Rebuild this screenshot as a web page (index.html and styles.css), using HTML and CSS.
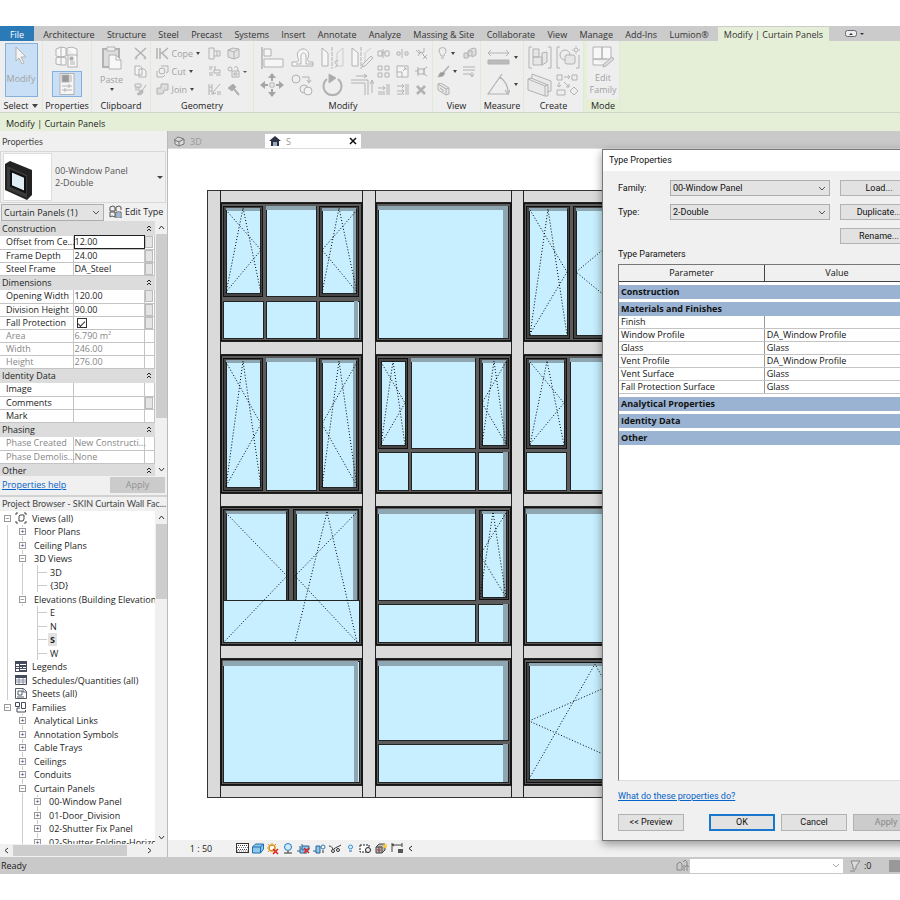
FILE: index.html
```html
<!DOCTYPE html>
<html lang="en">
<head>
  <meta charset="UTF-8">
  <title>Curtain Panels</title>
  <link rel="stylesheet" href="styles.css">
</head>
<body>
<div class="app">

  <nav class="tabs">
    <div class="tab-set">
      <button class="tab file">File</button>
      <button class="tab">Architecture</button>
      <button class="tab">Structure</button>
      <button class="tab">Steel</button>
      <button class="tab">Precast</button>
      <button class="tab">Systems</button>
      <button class="tab">Insert</button>
      <button class="tab">Annotate</button>
      <button class="tab">Analyze</button>
      <button class="tab">Massing &amp; Site</button>
      <button class="tab">Collaborate</button>
      <button class="tab">View</button>
      <button class="tab">Manage</button>
      <button class="tab">Add-Ins</button>
      <button class="tab">Lumion®</button>
      <button class="tab active">Modify | Curtain Panels</button>
    </div>
    <button class="toggle" aria-label="Minimize ribbon">
      <svg width="20" height="8" viewBox="0 0 20 8"><rect x="0.5" y="0.5" width="11" height="6" rx="2" fill="#eee" stroke="#667"/><path d="M4 5l2-2 2 2z" fill="#333"/><path d="M15 3h4l-2 2z" fill="#333"/></svg>
    </button>
  </nav>

  <div class="ribbon">
    <section class="panel p-select">
      <div class="tools">
        <button class="big on">
          <svg class="ico" width="14" height="20" viewBox="0 0 14 20"><path d="M2 1v14l3-3 3 6 2-1-3-6h5z" fill="#f4f4f4"/></svg>
          <span>Modify</span>
        </button>
      </div>
      <h2>Select <i class="caret"></i></h2>
    </section>

    <section class="panel p-props">
      <div class="tools stack">
        <button class="mid" aria-label="Type properties">
          <svg class="ico" width="24" height="22" viewBox="0 0 24 22"><path d="M1 3l5-2 5 1v8l-5 1-5-1zM6 1v10M12 2l5-1 5 2v7M12 2v8M1 12l5-1 5 1v7H6l-5-1zM6 11v8" fill="#f8f8f8"/><rect x="13" y="9" width="9" height="12" fill="#f8f8f8"/><path d="M15 11h3v3h-3z" fill="#aaa"/><path d="M15 16h5M15 18h5"/></svg>
        </button>
        <button class="mid on" aria-label="Properties">
          <svg class="ico" width="16" height="22" viewBox="0 0 16 22"><rect x="1" y="0.5" width="14" height="21" fill="#f6f6f6"/><rect x="3" y="2" width="7" height="7" fill="#999"/><path d="M12 2v7M3 13h10M3 17h10M10 11v4M6 15v4"/></svg>
        </button>
      </div>
      <h2>Properties</h2>
    </section>

    <section class="panel p-clip">
      <div class="tools">
        <button class="big">
          <svg class="ico" width="20" height="24" viewBox="0 0 20 24"><path d="M1 3h16v18H1z" fill="#ddd" stroke-width="2"/><path d="M5 1h8v4H5z" fill="#eee"/><path d="M7 9h7l5 5v9H7z" fill="#f8f8f8"/><path d="M14 9v5h5"/></svg>
          <span>Paste</span>
          <i class="caret"></i>
        </button>
        <div class="small one">
          <button aria-label="Cut to clipboard"><svg class="ico" width="13" height="13" viewBox="0 0 13 13"><path d="M1 1l10 9M12 1L2 10" stroke-width="1.5"/><circle cx="2" cy="11" r="1"/><circle cx="11" cy="11" r="1"/></svg></button>
          <button aria-label="Copy to clipboard"><svg class="ico" width="13" height="13" viewBox="0 0 13 13"><path d="M1 1h5l2 2v7H1zM5 4h5l2 2v6H5z" fill="#f4f4f4"/></svg></button>
          <button aria-label="Match type"><svg class="ico" width="13" height="13" viewBox="0 0 13 13"><path d="M1 1h6v3H1zM1 5h5M1 7h5"/><path d="M12 2L8 8M8 7c-3 0-2 3-5 4 3 2 6 0 6-3z" fill="#bbb"/></svg></button>
        </div>
      </div>
      <h2>Clipboard</h2>
    </section>

    <section class="panel p-geo">
      <div class="tools">
        <div class="small geo">
          <button><svg class="ico" width="13" height="13" viewBox="0 0 13 13"><path d="M1 1v11M4 1v11M12 1L6 6l6 6M4 6h3" stroke-width="1.5"/></svg><span>Cope</span><i class="caret"></i></button>
          <button aria-label="Wall joins"><svg class="ico" width="13" height="13" viewBox="0 0 13 13"><path d="M1 1h5v3h6v5H6v3H1zM6 4v5M9 4v5"/></svg></button>
          <button aria-label="Split face"><svg class="ico" width="13" height="13" viewBox="0 0 13 13"><path d="M1 3l5-2 6 1v8l-5 2-6-2zM1 3l6 2v7M7 5l5-3" fill="#e2e2e2"/></svg></button>
          <button><svg class="ico" width="13" height="13" viewBox="0 0 13 13"><path d="M5 1h7v6l-2 1"/><circle cx="6" cy="6" r="3"/><path d="M1 6v6h6l2-2" /></svg><span>Cut</span><i class="caret"></i></button>
          <button aria-label="Beam joins"><svg class="ico" width="13" height="13" viewBox="0 0 13 13"><path d="M1 2h4M1 4h3M1 8h4M1 10h4M7 1v4M6 5h6v3H6zM8 10h5"/></svg></button>
          <button aria-label="Paint"><svg class="ico" width="20" height="13" viewBox="0 0 20 13"><circle cx="3" cy="4" r="2"/><path d="M5 6h7v6H5zM7 3c2-3 4-1 4 3M7 8h3v2H7z"/><path d="M16 6h4l-2 2z" fill="#555" stroke="none"/></svg></button>
          <button><svg class="ico" width="13" height="13" viewBox="0 0 13 13"><path d="M5 1h7v6H8v1a3 3 0 0 1-3 3H1V5h4z" fill="#ddd"/></svg><span>Join</span><i class="caret"></i></button>
          <button aria-label="Edit joins"><svg class="ico" width="13" height="13" viewBox="0 0 13 13"><path d="M1 1v11M4 1v11M12 1L6 8l-1 3 3-1M9 9h4M9 11h4M1 4h3M1 8h3"/></svg></button>
          <button aria-label="Demolish"><svg class="ico" width="13" height="13" viewBox="0 0 13 13"><path d="M1 5l5-4 3 3-4 4z" fill="#aaa"/><path d="M7 6l5 6" stroke-width="2"/></svg></button>
        </div>
      </div>
      <h2>Geometry</h2>
    </section>

    <section class="panel p-modify">
      <div class="tools">
        <div class="large four">
          <button aria-label="Align"><svg class="ico" width="23" height="22" viewBox="0 0 23 22"><path d="M1 0v22" stroke-width="1.5"/><path d="M3 2h7v7H3zM3 12h19v8H3z" fill="#f6f6f6"/></svg></button>
          <button aria-label="Offset"><svg class="ico" width="23" height="22" viewBox="0 0 23 22"><path d="M1 19v-4h4c3 0 3-2 2-4-2-5 1-9 5-9s7 4 5 9c-1 2 0 4 2 4h3v4z" fill="#f6f6f6"/><path d="M5 17h5V9c0-4 5-4 5 0v8h7"/></svg></button>
          <button aria-label="Mirror by axis"><svg class="ico" width="23" height="22" viewBox="0 0 23 22"><path d="M1 1l6 5v13H1z" fill="#f6f6f6"/><path d="M22 1l-6 5v13h6z" stroke="#ccc"/><path d="M11 0v22" stroke-dasharray="4 1"/><path d="M17 14c-3-1-4 1-2 3s1 2-1 3" /></svg></button>
          <button aria-label="Mirror by line"><svg class="ico" width="23" height="22" viewBox="0 0 23 22"><path d="M1 1l6 5v13H1z" fill="#f6f6f6"/><path d="M20 1l-6 5v9" stroke="#ccc"/><path d="M10 0v22" stroke-dasharray="4 1"/><path d="M12 17l8-8 2 2-8 8-3 1z" fill="#eee"/></svg></button>
          <button aria-label="Move"><svg class="ico" width="24" height="24" viewBox="0 0 24 24"><path d="M12 0l4 5h-3v3h-2V5H8zM12 24l-4-5h3v-3h2v3h3zM0 12l5-4v3h3v2H5v3zM24 12l-5 4v-3h-3v-2h3V8z" fill="#a4a4a4" stroke="none"/><path d="M10 10h4v4h-4z"/></svg></button>
          <button aria-label="Copy"><svg class="ico" width="23" height="24" viewBox="0 0 23 24"><circle cx="5" cy="6" r="4"/><circle cx="13" cy="16" r="4"/><circle cx="17" cy="18" r="4" fill="#f2f2f2"/><path d="M11 4h7v5M16 7l2 3 2-3"/></svg></button>
          <button aria-label="Rotate"><svg class="ico" width="23" height="24" viewBox="0 0 23 24"><path d="M6 6a9 9 0 1 0 11 0" stroke-width="2"/><path d="M8 1l7 4-7 5z" fill="#aaa"/></svg></button>
          <button aria-label="Trim to corner"><svg class="ico" width="23" height="24" viewBox="0 0 23 24"><path d="M0 7h17v15M0 10h14v12"/><path d="M5 3h10M13 1l3 2-3 2M21 20V8M19 11l2-4 2 4"/></svg></button>
        </div>
        <div class="small three">
          <button aria-label="Split element"><svg class="ico" width="13" height="13" viewBox="0 0 13 13"><path d="M1 4h4v5H1zM8 4h4v5H8zM6 2v9M5 6h3"/></svg></button>
          <button aria-label="Split with gap"><svg class="ico" width="13" height="13" viewBox="0 0 13 13"><path d="M1 5h3v3H1zM9 5h3v3H9zM6 2v9"/></svg></button>
          <button aria-label="Unpin"><svg class="ico" width="13" height="13" viewBox="0 0 13 13"><path d="M3 3l6 5M9 1v4l-6 1M1 3l4 4M8 8l4 4M12 8l-4 4M3 9l2-3"/></svg></button>
          <button aria-label="Array"><svg class="ico" width="13" height="13" viewBox="0 0 13 13"><path d="M1 1h4v4H1zM8 1h4v4H8zM1 8h4v4H1zM8 8h4v4H8z"/></svg></button>
          <button aria-label="Scale"><svg class="ico" width="13" height="13" viewBox="0 0 13 13"><path d="M1 1h11v11H1zM1 7h5v5M7 6l3-3M8 3h2v2" fill="#f4f4f4"/></svg></button>
          <button aria-label="Pin"><svg class="ico" width="13" height="13" viewBox="0 0 13 13"><path d="M3 4h6v5H3zM3 2v9M9 3v7M0 6h3M9 4l3-2M9 9l3 2"/></svg></button>
          <button aria-label="Trim single"><svg class="ico" width="13" height="13" viewBox="0 0 13 13"><path d="M12 1v11M10 1v11M1 5h7M6 3l2 2-2 2M1 9h7M1 11h7"/></svg></button>
          <button aria-label="Trim multiple"><svg class="ico" width="13" height="13" viewBox="0 0 13 13"><path d="M12 1v11M10 1v11M1 3h7M6 1l2 2-2 2M1 8h7M6 6l2 2-2 2M1 11h7"/></svg></button>
          <button aria-label="Delete"><svg class="ico" width="13" height="13" viewBox="0 0 13 13"><path d="M2 3l8 8M10 3l-8 8" stroke-width="2.5"/></svg></button>
        </div>
      </div>
      <h2>Modify</h2>
    </section>

    <section class="panel p-view">
      <div class="tools">
        <div class="small two">
          <button aria-label="Hide in view"><svg class="ico" width="11" height="13" viewBox="0 0 11 13"><path d="M4 9c0-2-2-3-2-5a3 3 0 0 1 7 0c0 2-2 3-2 5zM4 11h3"/></svg><i class="caret"></i></button>
          <button aria-label="Displace elements"><svg class="ico" width="14" height="13" viewBox="0 0 14 13"><path d="M1 6h4v5H1zM5 4h4v5H5zM8 2l3-1 2 1v6l-4 2M5 4l3-2" fill="#ddd"/></svg></button>
          <button aria-label="Override graphics"><svg class="ico" width="13" height="13" viewBox="0 0 13 13"><path d="M12 1L6 8" stroke-width="1.5"/><path d="M6 7l-3 1-2 4 5-1 2-3z" fill="#999"/></svg><i class="caret"></i></button>
          <button aria-label="Linework"><svg class="ico" width="13" height="13" viewBox="0 0 13 13"><path d="M0 2h12M0 5h12M0 9h8M9 7v5M7 9l2 3 2-3"/></svg></button>
          <button aria-label="Selection box"><svg class="ico" width="13" height="13" viewBox="0 0 13 13"><path d="M1 1l3-1 8 5v6l-3 1-8-5zM1 1l8 5v6M9 6l3-1M3 5l3 2v2" fill="#e6e6e6"/></svg></button>
        </div>
      </div>
      <h2>View</h2>
    </section>

    <section class="panel p-measure">
      <div class="tools">
        <div class="large">
          <button aria-label="Measure"><svg class="ico" width="23" height="22" viewBox="0 0 23 22"><path d="M1 6h21M4 3L1 6l3 3M19 3l3 3-3 3" /><path d="M1 13h21v4H1z" fill="#bbb"/></svg><i class="caret"></i></button>
          <button aria-label="Dimension"><svg class="ico" width="23" height="24" viewBox="0 0 23 24"><path d="M15 1L1 21h21M13 4c5 4 8 9 8 15M12 5l4 1M18 17l3 4 2-4" stroke-width="1.2"/></svg><i class="caret"></i></button>
        </div>
      </div>
      <h2>Measure</h2>
    </section>

    <section class="panel p-create">
      <div class="tools">
        <div class="large two">
          <button aria-label="Create assembly"><svg class="ico" width="24" height="23" viewBox="0 0 24 23"><path d="M4 1H1v21h3M20 1h3v21h-3"/><path d="M5 3h6v8H5zM5 11h9v8H5zM14 11V7l5-1v10l-5 3z" fill="#e6e6e6"/></svg></button>
          <button aria-label="Create group"><svg class="ico" width="24" height="23" viewBox="0 0 24 23"><path d="M4 1H1v21h3M20 22h3V9"/><circle cx="9" cy="9" r="5"/><rect x="9" y="9" width="10" height="9" rx="2" fill="#e6e6e6"/><circle cx="20" cy="4" r="2"/><path d="M20 0v1M20 7v1M16 4h1M23 4h1"/></svg></button>
          <button aria-label="Create parts"><svg class="ico" width="25" height="24" viewBox="0 0 25 24"><path d="M5 1l19 7v10l-4 1M5 1v5M1 6l3-1 17 7v11l-3 0L1 17zM1 6l17 7v10M18 13l3-1" fill="#e9e9e9"/></svg></button>
          <button aria-label="Create similar"><svg class="ico" width="24" height="24" viewBox="0 0 24 24"><path d="M1 2h5v5H1zM16 2h5v5h-5zM8 4h6M12 2l2 2-2 2M3 9v5M1 12l2 2 2-2M8 9l5 5M13 11v3h-3M1 17h8v5H1zM18 14l4 4-4 4-4-4z"/></svg></button>
        </div>
      </div>
      <h2>Create</h2>
    </section>

    <section class="panel p-mode">
      <div class="tools">
        <button class="big">
          <svg class="ico" width="23" height="22" viewBox="0 0 23 22"><path d="M1 1h9v12H1zM10 1h9v12h-9zM1 13h14M1 13v6h12" fill="#f8f8f8"/><path d="M12 18l8-7 2 2-8 7-3 1z" fill="#ddd"/></svg>
          <span>Edit<br>Family</span>
        </button>
      </div>
      <h2>Mode</h2>
    </section>
  </div>

  <div class="options">Modify | Curtain Panels</div>

  <div class="workspace">
    <aside class="side">
      <section class="props">
        <h3>Properties</h3>
        <button class="type">
          <span class="thumb"><svg width="30" height="40" viewBox="0 0 30 40"><path d="M0 3l5-3 22 9v25l-5 5-22-10z" fill="#222"/><path d="M2 5l20 9v23L2 28z" fill="#3a3a3a"/><path d="M6 10l14 6v15L6 25z" fill="#dfeef5" stroke="#111" stroke-width="2"/></svg></span>
          <span class="type-name">00-Window Panel<br>2-Double</span>
          <i class="caret"></i>
        </button>
        <div class="filter">
          <div class="pick">
            <select aria-label="Selection filter"><option>Curtain Panels (1)</option></select>
            <svg class="chev" width="8" height="5" viewBox="0 0 8 5"><path d="M1 1l3 3 3-3"/></svg>
          </div>
          <button class="edit-type"><svg width="13" height="13" viewBox="0 0 13 13" fill="none" stroke="#555"><path d="M1 2l3-1 2 1v4H1zM7 2l3-1 2 1v3M7 2v4M1 7h5v5l-3-1-2 1z"/><path d="M7 7h5v6H7z" fill="#fff"/><path d="M8 9h3M8 11h3" stroke="#27c"/></svg>Edit Type</button>
        </div>
        <div class="scroller">
          <div class="clip">
            <table class="grid">
              <colgroup><col class="c1"><col class="c2"><col class="c3"></colgroup>
              <tr class="head"><th colspan="2">Construction</th><td><svg class="fold" width="5" height="7" viewBox="0 0 5 7"><path d="M0 3l2-2 2 2M0 6l2-2 2 2"/></svg></td></tr>
              <tr><th>Offset from Ce...</th><td><input class="focus" aria-label="Offset" value="12.00"></td><td><button aria-label="Associate offset"></button></td></tr>
              <tr><th>Frame Depth</th><td><input aria-label="Frame Depth" value="24.00"></td><td><button aria-label="Associate depth"></button></td></tr>
              <tr><th>Steel Frame</th><td><input aria-label="Steel Frame" value="DA_Steel"></td><td><button aria-label="Associate frame"></button></td></tr>
              <tr class="head"><th colspan="2">Dimensions</th><td><svg class="fold" width="5" height="7" viewBox="0 0 5 7"><path d="M0 3l2-2 2 2M0 6l2-2 2 2"/></svg></td></tr>
              <tr><th>Opening Width</th><td><input aria-label="Opening Width" value="120.00"></td><td><button aria-label="Associate width"></button></td></tr>
              <tr><th>Division Height</th><td><input aria-label="Division Height" value="90.00"></td><td><button aria-label="Associate height"></button></td></tr>
              <tr><th>Fall Protection</th><td><input type="checkbox" aria-label="Fall Protection" checked></td><td><button aria-label="Associate protection"></button></td></tr>
              <tr class="ro"><th>Area</th><td>6.790 m²</td><td></td></tr>
              <tr class="ro"><th>Width</th><td>246.00</td><td></td></tr>
              <tr class="ro"><th>Height</th><td>276.00</td><td></td></tr>
              <tr class="head"><th colspan="2">Identity Data</th><td><svg class="fold" width="5" height="7" viewBox="0 0 5 7"><path d="M0 3l2-2 2 2M0 6l2-2 2 2"/></svg></td></tr>
              <tr><th>Image</th><td></td><td></td></tr>
              <tr><th>Comments</th><td><input aria-label="Comments"></td><td><button aria-label="Associate comments"></button></td></tr>
              <tr><th>Mark</th><td><input aria-label="Mark"></td><td></td></tr>
              <tr class="head"><th colspan="2">Phasing</th><td><svg class="fold" width="5" height="7" viewBox="0 0 5 7"><path d="M0 3l2-2 2 2M0 6l2-2 2 2"/></svg></td></tr>
              <tr class="ro"><th>Phase Created</th><td>New Constructi...</td><td></td></tr>
              <tr class="ro"><th>Phase Demolis...</th><td>None</td><td></td></tr>
              <tr class="head"><th colspan="2">Other</th><td><svg class="fold" width="5" height="7" viewBox="0 0 5 7"><path d="M0 3l2-2 2 2M0 6l2-2 2 2"/></svg></td></tr>
            </table>
          </div>
          <div class="vbar">
            <svg class="arrow" width="7" height="5" viewBox="0 0 7 5"><path d="M1 4l2.500-3L6 4"/></svg>
            <span class="thumb-props"></span>
            <svg class="arrow" width="7" height="5" viewBox="0 0 7 5"><path d="M1 1l2.500 3L6 1"/></svg>
          </div>
        </div>
        <div class="apply-row"><a href="#">Properties help</a><button disabled>Apply</button></div>
      </section>

      <section class="browser">
        <h3>Project Browser - SKIN Curtain Wall Fac...</h3>
        <div class="scroller">
          <ul class="tree">
            <li class="l0 first"><button class="ex" aria-label="Collapse">−</button><svg width="12" height="12" viewBox="0 0 12 12" fill="none" stroke="#444"><path d="M1 3V1h2M9 1h2v2M11 9v2H9M3 11H1V9M4 4l1-1h4v4L8 9H4z"/></svg>Views (all)</li>
            <li class="l1 run"><button class="ex" aria-label="Expand">+</button>Floor Plans</li>
            <li class="l1 run"><button class="ex" aria-label="Expand">+</button>Ceiling Plans</li>
            <li class="l1 run"><button class="ex" aria-label="Collapse">−</button>3D Views</li>
            <li class="l2 leaf run mid-run">3D</li>
            <li class="l2 leaf run mid-run">{3D}</li>
            <li class="l1 run"><button class="ex" aria-label="Collapse">−</button>Elevations (Building Elevation</li>
            <li class="l2 leaf run">E</li>
            <li class="l2 leaf run">N</li>
            <li class="l2 leaf run"><b>S</b></li>
            <li class="l2 leaf run">W</li>
            <li class="l0 leaf run"><svg width="12" height="11" viewBox="0 0 12 11"><path d="M0 0h12v11H0z" fill="#454b5a"/><path d="M1 3h3v2H1zM5 3h6v1H5zM1 6h3v1H1zM5 6h2v1H5zM8 6h3v1H8zM1 8h3v2H1zM5 8h6v1H5z" fill="#fff"/></svg>Legends</li>
            <li class="l0 leaf run"><svg width="12" height="10" viewBox="0 0 12 10"><path d="M0.500 0.500h11v9h-11z" fill="#fff" stroke="#454b5a"/><path d="M1 5h10M1 7h10M4 2v7M8 2v7" stroke="#8a90a0"/><path d="M0 0h12v3H0z" fill="#454b5a"/></svg>Schedules/Quantities (all)</li>
            <li class="l0 leaf run"><svg width="12" height="11" viewBox="0 0 12 11"><path d="M0.500 0.500h8l3 3v7h-11zM8 1v3h3M3 3h4v4H3zM2 9h7" fill="#fff" stroke="#555c6a"/></svg>Sheets (all)</li>
            <li class="l0 last"><button class="ex" aria-label="Collapse">−</button><svg width="12" height="11" viewBox="0 0 12 11"><path d="M0.500 0.500h4v4h-4zM6.500 0.500h4v6h-4zM2 6v4h8.500V8M2 6h3" fill="#fff" stroke="#454b5a"/></svg>Families</li>
            <li class="l1"><button class="ex" aria-label="Expand">+</button>Analytical Links</li>
            <li class="l1"><button class="ex" aria-label="Expand">+</button>Annotation Symbols</li>
            <li class="l1"><button class="ex" aria-label="Expand">+</button>Cable Trays</li>
            <li class="l1"><button class="ex" aria-label="Expand">+</button>Ceilings</li>
            <li class="l1"><button class="ex" aria-label="Expand">+</button>Conduits</li>
            <li class="l1"><button class="ex" aria-label="Collapse">−</button>Curtain Panels</li>
            <li class="l2 mid-run"><button class="ex" aria-label="Expand">+</button>00-Window Panel</li>
            <li class="l2 mid-run"><button class="ex" aria-label="Expand">+</button>01-Door_Division</li>
            <li class="l2 mid-run"><button class="ex" aria-label="Expand">+</button>02-Shutter Fix Panel</li>
            <li class="l2 mid-run"><button class="ex" aria-label="Expand">+</button>02-Shutter Folding-Horizo</li>
          </ul>
          <div class="vbar">
            <svg class="arrow" width="7" height="5" viewBox="0 0 7 5"><path d="M1 4l2.500-3L6 4"/></svg>
            <span class="thumb-tree"></span>
            <svg class="arrow" width="7" height="5" viewBox="0 0 7 5"><path d="M1 1l2.500 3L6 1"/></svg>
          </div>
        </div>
        <div class="hbar">
          <svg class="arrow" width="5" height="7" viewBox="0 0 5 7"><path d="M4 1L1 3.500 4 6"/></svg>
          <span></span>
          <svg class="arrow" width="5" height="7" viewBox="0 0 5 7"><path d="M1 1l3 2.500L1 6"/></svg>
        </div>
      </section>
    </aside>

    <main class="view">
      <div class="view-tabs">
        <button class="vtab"><svg width="12" height="11" viewBox="0 0 12 11" fill="#ddd" stroke="#777"><path d="M1 4l4-3 6 2v5l-5 2-4-2V4M1 4l5 2 5-3M6 6v4"/></svg><span>3D</span></button>
        <button class="vtab current"><svg width="12" height="10" viewBox="0 0 12 10"><path d="M6 0l6 5h-2v5H2V5H0z" fill="#2b3142"/><path d="M4 6h4v4H4z" fill="#9ab"/></svg><span>S</span><svg class="close" width="8" height="8" viewBox="0 0 8 8"><path d="M1 1l6 6M7 1L1 7" stroke="#111" stroke-width="1.500"/></svg></button>
      </div>

      <div class="canvas">
        <svg class="facade" width="732" height="690" viewBox="168 149 732 690">
          <!-- steel grid -->
          <rect class="wall" x="207.500" y="190.500" width="480" height="607"/>
          <path class="edge" d="M220.500 190v607M362.500 190v607M375.500 190v607M511.500 190v607M523.500 190v607"/>

          <!-- row 1 -->
          <rect class="frame" x="221" y="203" width="141" height="138"/>
          <rect class="sash" x="223" y="206" width="39" height="90"/>
          <rect class="glass" x="226" y="209" width="34" height="84"/>
          <rect class="shade" x="226" y="208" width="34" height="3"/>
          <rect class="glass" x="266" y="206" width="50" height="90"/>
          <rect class="shade" x="266" y="206" width="50" height="4"/>
          <rect class="sash" x="319" y="206" width="39" height="90"/>
          <rect class="glass" x="322" y="209" width="34" height="84"/>
          <path class="shade" d="M322 208h34v85h-3v-82h-31z"/>
          <rect class="glass" x="223" y="301" width="40" height="37"/>
          <rect class="glass" x="266" y="301" width="50" height="37"/>
          <rect class="glass" x="319" y="301" width="40" height="37"/>
          <rect class="shade" x="354" y="301" width="4" height="37"/>
          <path class="swing" d="M226 293l17-85 18 85M226 210l35 40-35 42M322 293l17-85 18 85M357 210l-35 40 35 42"/>

          <rect class="frame" x="376" y="203" width="135" height="138"/>
          <rect class="glass" x="378" y="206" width="130" height="132"/>
          <path class="shade" d="M378 206h130v132h-5V210H378z"/>

          <rect class="frame" x="524" y="203" width="141" height="138"/>
          <rect class="sash" x="526" y="206" width="43" height="132"/>
          <rect class="glass" x="529" y="209" width="38" height="126"/>
          <rect class="shade" x="529" y="208" width="38" height="3"/>
          <rect class="sash" x="573" y="206" width="80" height="132"/>
          <rect class="glass" x="576" y="209" width="75" height="126"/>
          <rect class="shade" x="576" y="208" width="75" height="3"/>
          <path class="swing" d="M530 335l18-126 19 126M530 210l37 62-37 62M651 210l-75 62 75 62"/>

          <!-- row 2 -->
          <rect class="frame" x="221" y="355" width="141" height="138"/>
          <rect class="sash" x="223" y="358" width="39" height="132"/>
          <rect class="glass" x="226" y="361" width="34" height="126"/>
          <rect class="shade" x="226" y="360" width="34" height="3"/>
          <rect class="glass" x="266" y="358" width="50" height="132"/>
          <rect class="shade" x="266" y="358" width="50" height="4"/>
          <rect class="sash" x="319" y="358" width="39" height="132"/>
          <rect class="glass" x="322" y="361" width="34" height="126"/>
          <path class="shade" d="M322 360h34v127h-3V363h-31z"/>
          <path class="swing" d="M226 487l17-126 18 126M226 362l35 62-35 62M322 487l17-126 18 126M357 362l-35 62 35 62"/>

          <rect class="frame" x="376" y="355" width="135" height="138"/>
          <rect class="sash" x="378" y="358" width="29" height="90"/>
          <rect class="glass" x="381" y="361" width="24" height="84"/>
          <rect class="glass" x="411" y="358" width="64" height="90"/>
          <rect class="shade" x="411" y="358" width="64" height="4"/>
          <rect class="sash" x="479" y="358" width="29" height="90"/>
          <rect class="glass" x="482" y="361" width="24" height="84"/>
          <path class="shade" d="M482 360h24v85h-3v-82h-21z"/>
          <rect class="glass" x="378" y="452" width="30" height="38"/>
          <rect class="glass" x="411" y="452" width="64" height="38"/>
          <rect class="glass" x="478" y="452" width="30" height="38"/>
          <rect class="shade" x="503" y="452" width="5" height="38"/>
          <path class="swing" d="M381 445l12-84 12 84M381 362l24 41-24 41M482 445l12-84 12 84M506 362l-24 41 24 41"/>

          <rect class="frame" x="524" y="355" width="141" height="138"/>
          <rect class="sash" x="526" y="358" width="40" height="90"/>
          <rect class="glass" x="529" y="361" width="35" height="84"/>
          <rect class="shade" x="529" y="360" width="35" height="3"/>
          <rect class="glass" x="526" y="452" width="40" height="38"/>
          <rect class="glass" x="570" y="358" width="90" height="132"/>
          <rect class="shade" x="570" y="358" width="90" height="4"/>
          <path class="swing" d="M530 445l17-84 17 84M530 362l34 41-34 41"/>

          <!-- row 3 -->
          <rect class="frame" x="221" y="507" width="141" height="138"/>
          <rect class="sash" x="223" y="509" width="65" height="95"/>
          <rect class="glass" x="226" y="512" width="60" height="92"/>
          <rect class="shade" x="226" y="511" width="60" height="3"/>
          <rect class="sash" x="293" y="509" width="65" height="95"/>
          <rect class="glass" x="296" y="512" width="60" height="92"/>
          <path class="shade" d="M296 511h61v89h-4v-86h-57z"/>
          <rect class="glass" x="223" y="600" width="136" height="42"/>
          <path class="swing" d="M226 513l61 63-63 66M356 513l-61 63 62 66M327 512l-32 130M327 512l30 130"/>

          <rect class="frame" x="376" y="507" width="135" height="138"/>
          <rect class="glass" x="378" y="509" width="97" height="91"/>
          <rect class="shade" x="378" y="509" width="97" height="5"/>
          <rect class="sash" x="479" y="510" width="29" height="89"/>
          <rect class="glass" x="482" y="512" width="24" height="85"/>
          <path class="shade" d="M482 511h24v86h-3v-83h-21z"/>
          <rect class="glass" x="378" y="604" width="97" height="38"/>
          <rect class="glass" x="478" y="604" width="30" height="38"/>
          <rect class="shade" x="503" y="604" width="5" height="38"/>
          <path class="swing" d="M480 597l13-85 13 85M506 513l-26 42 26 42"/>

          <rect class="frame" x="524" y="507" width="141" height="138"/>
          <rect class="glass" x="526" y="509" width="130" height="133"/>
          <rect class="shade" x="526" y="509" width="130" height="5"/>

          <!-- row 4 -->
          <rect class="frame" x="221" y="659" width="141" height="126"/>
          <rect class="glass" x="223" y="661" width="136" height="121"/>
          <path class="shade" d="M223 661h135v121h-4V666H223z"/>

          <rect class="frame" x="376" y="659" width="135" height="126"/>
          <rect class="glass" x="378" y="661" width="130" height="79"/>
          <path class="shade" d="M378 661h130v79h-5v-74H378z"/>
          <rect class="glass" x="378" y="744" width="130" height="38"/>
          <rect class="shade" x="503" y="744" width="5" height="38"/>

          <rect class="frame" x="524" y="659" width="141" height="126"/>
          <rect class="sash" x="526" y="662" width="134" height="120"/>
          <rect class="glass" x="529" y="664" width="130" height="115"/>
          <rect class="shade" x="529" y="663" width="130" height="3"/>
          <path class="swing" d="M529 779l66-115 64 115M659 664l-130 57 130 58"/>

          <!-- beams between storeys -->
          <path class="edge" d="M220 202.500h142M375 202.500h136M523 202.500h140M220 341.500h142M375 341.500h136M523 341.500h140M220 354.500h142M375 354.500h136M523 354.500h140M220 493.500h142M375 493.500h136M523 493.500h140M220 506.500h142M375 506.500h136M523 506.500h140M220 645.500h142M375 645.500h136M523 645.500h140M220 658.500h142M375 658.500h136M523 658.500h140M220 785.500h142M375 785.500h136M523 785.500h140"/>
        </svg>
      </div>

      <div class="view-bar">
        <button class="scale">1 : 50</button>
        <button aria-label="Detail level"><svg width="13" height="11" viewBox="0 0 13 11"><rect x="0.500" y="0.500" width="12" height="9" fill="#fff" stroke="#333"/><path d="M2 2.500h10M2 6.500h10" stroke="#444" stroke-dasharray="1 1"/><path d="M1 4.500h11M1 8h11" stroke="#777" stroke-dasharray="1 1"/></svg></button>
        <button aria-label="Visual style"><svg width="12" height="11" viewBox="0 0 12 11"><path d="M0.500 4l3-3h8v5l-3 4h-8zM0.500 4h8v6M8.500 4l3-3" fill="#8cc8ee" stroke="#1f6fa8"/></svg></button>
        <button aria-label="Sun path"><svg width="12" height="12" viewBox="0 0 12 12"><circle cx="5" cy="5" r="3" fill="#fff" stroke="#e0930f" stroke-width="1.500"/><path d="M5 0v1M0 5h1M1 1l1 1M9 1L8 2M1 9l1-1" stroke="#e0930f"/><path d="M6 6l5 5M11 6l-5 5" stroke="#d22" stroke-width="1.500"/></svg></button>
        <button aria-label="Shadows"><svg width="12" height="12" viewBox="0 0 12 12"><circle cx="6" cy="4" r="3.500" fill="#cfeaff" stroke="#2a7ab5"/><path d="M2 10h8M6 8v2" stroke="#333"/></svg></button>
        <button aria-label="Crop view"><svg width="13" height="11" viewBox="0 0 13 11"><path d="M0 8h3M3 3v7h7M5 1v6h7V3H5" fill="#8cc8ee" stroke="#2a6090"/><path d="M7 5l5 5M12 5l-5 5" stroke="#d22" stroke-width="1.500"/></svg></button>
        <button aria-label="Show crop region"><svg width="13" height="11" viewBox="0 0 13 11"><path d="M0 8h3M3 3v7h4V3z" fill="#8cc8ee" stroke="#2a6090"/><circle cx="10" cy="4" r="2" fill="#fff" stroke="#2a6fb5"/><path d="M10 7v3" stroke="#333"/></svg></button>
        <button aria-label="Temporary hide"><svg width="13" height="10" viewBox="0 0 13 10" fill="none" stroke="#333"><path d="M0 2c2 0 3 1 4 3M5 5c2-2 4-2 7-4"/><circle cx="4" cy="7" r="1.500"/><circle cx="9" cy="6" r="1.500"/></svg></button>
        <button aria-label="Reveal hidden"><svg width="11" height="11" viewBox="0 0 11 11"><circle cx="5.500" cy="4" r="2" fill="#dff2ff" stroke="#2a8fd5"/><path d="M4 8h3" stroke="#2a6fb5"/></svg></button>
        <button aria-label="View properties"><svg width="13" height="11" viewBox="0 0 13 11"><path d="M1 2h9v7H1z" fill="#fff" stroke="#222" stroke-dasharray="2 1"/><circle cx="9" cy="7" r="2.500" fill="#eee" stroke="#222"/></svg></button>
        <button aria-label="Analytical model"><svg width="13" height="11" viewBox="0 0 13 11"><path d="M1 4l3-3h6v6l-3 3H1zM1 4h6v6M4 4v6" fill="#bbb" stroke="#444"/><circle cx="10" cy="3" r="2" fill="#ffc837"/><path d="M2 7h4" stroke="#c33"/></svg></button>
        <button aria-label="Constraints"><svg width="13" height="11" viewBox="0 0 13 11"><path d="M1 0v9M11 0v4M1 2h10M3 1L1 2l2 1" stroke="#444" fill="none"/><rect x="7" y="6" width="5" height="4" fill="#555"/></svg></button>
        <button aria-label="Scroll left"><svg width="7" height="7" viewBox="0 0 7 7"><path d="M5 1L2 3.500 5 6" fill="none" stroke="#222"/></svg></button>
      </div>

      <div class="dialog" role="dialog" aria-label="Type Properties">
        <h3>Type Properties</h3>
        <div class="body">
          <div class="fields">
            <label for="family">Family:</label>
            <div class="pick">
              <select id="family"><option>00-Window Panel</option></select>
              <svg class="chev" width="8" height="5" viewBox="0 0 8 5"><path d="M1 1l3 3 3-3"/></svg>
            </div>
            <button>Load...</button>
            <label for="type">Type:</label>
            <div class="pick">
              <select id="type"><option>2-Double</option></select>
              <svg class="chev" width="8" height="5" viewBox="0 0 8 5"><path d="M1 1l3 3 3-3"/></svg>
            </div>
            <button>Duplicate...</button>
            <button class="rename">Rename...</button>
          </div>
          <p>Type Parameters</p>
          <div class="params">
            <table>
              <thead><tr><th>Parameter</th><th>Value</th></tr></thead>
              <tbody>
                <tr class="group"><th colspan="2"><div>Construction</div></th></tr>
                <tr class="group"><th colspan="2"><div>Materials and Finishes</div></th></tr>
                <tr><td>Finish</td><td></td></tr>
                <tr><td>Window Profile</td><td>DA_Window Profile</td></tr>
                <tr><td>Glass</td><td>Glass</td></tr>
                <tr><td>Vent Profile</td><td>DA_Window Profile</td></tr>
                <tr><td>Vent Surface</td><td>Glass</td></tr>
                <tr><td>Fall Protection Surface</td><td>Glass</td></tr>
                <tr class="group"><th colspan="2"><div>Analytical Properties</div></th></tr>
                <tr class="group"><th colspan="2"><div>Identity Data</div></th></tr>
                <tr class="group"><th colspan="2"><div>Other</div></th></tr>
              </tbody>
            </table>
          </div>
          <a href="#">What do these properties do?</a>
          <div class="actions">
            <button>&lt;&lt; Preview</button>
            <button class="ok">OK</button>
            <button>Cancel</button>
            <button disabled>Apply</button>
          </div>
        </div>
      </div>
    </main>
  </div>

  <footer class="status">
    <span class="ready">Ready</span>
    <svg width="13" height="13" viewBox="0 0 13 13" fill="none" stroke="#888"><path d="M1 5l3-2 2 2v6H1zM7 3l2-2 2 2v3M8 12V6M11 12V6M9 8l2-2 2 2"/></svg>
    <div class="pick">
      <select aria-label="Active workset"><option></option></select>
      <svg class="chev" width="8" height="5" viewBox="0 0 8 5"><path d="M1 1l3 3 3-3"/></svg>
    </div>
    <svg width="12" height="12" viewBox="0 0 12 12" fill="#ddd" stroke="#888"><path d="M2 1h9l-4 5v3H4V6zM1 11h5"/></svg>
    <span class="count">:0</span>
    <span class="grip"></span>
  </footer>
</div>
</body>
</html>
```

FILE: styles.css
```css
* {
  box-sizing: border-box;
}

body {
  margin: 0;
  padding: 26px 0;
  height: 100vh;
  background: #fff;
  color: #1c1c1c;
  font: 9px/13px "Open Sans", "Noto Sans", sans-serif;
  overflow: hidden;
}

h2, h3, p, ul {
  margin: 0;
  padding: 0;
  font-size: 9px;
  font-weight: normal;
}

button, input, select {
  margin: 0;
  padding: 0;
  border: 0;
  border-radius: 0;
  background: none;
  color: inherit;
  font: inherit;
}

button {
  display: flex;
  align-items: center;
  justify-content: center;
  white-space: nowrap;
}

svg {
  display: block;
  flex: none;
}

a {
  color: #0563c9;
}

.app {
  display: flex;
  flex-direction: column;
  height: 100%;
  overflow: hidden;
}

.caret {
  border: 2px solid transparent;
  border-top: 3px solid #444;
  border-bottom: 0;
}

/* ribbon tabs */
.tabs {
  display: flex;
  height: 15px;
  background: #cbcbcb;
}

.tab-set {
  display: flex;
  width: 829px;
}

.tab {
  flex: 1 0 auto;
  padding: 2px 6px 0;
  color: #333;
}

.tab.file {
  flex: none;
  width: 34px;
  margin-right: 3px;
  background: #2a7ab8;
  color: #fff;
}

.tab.active {
  flex: none;
  margin: 1px 0 0 3px;
  padding-top: 1px;
  background: #e5efd8;
}

.toggle {
  margin-left: 16px;
}

/* ribbon */
.ribbon {
  display: flex;
  height: 71px;
  background: #e5efd8;
}

.panel {
  display: flex;
  flex-direction: column;
  border-right: 1px solid #e1ead6;
  background: #eee;
}

.panel h2 {
  display: flex;
  align-items: center;
  justify-content: center;
  gap: 4px;
  height: 13px;
}

.tools {
  display: flex;
  justify-content: center;
  height: 58px;
  padding-top: 3px;
  color: #a2a2a2;
}

.p-select { width: 43px; }
.p-props { width: 49px; }
.p-clip { width: 59px; }
.p-geo { width: 103px; }
.p-modify { width: 179px; }
.p-view { width: 48px; }
.p-measure { width: 43px; }
.p-create { width: 60px; }
.p-mode { width: 36px; border-left: 3px solid #e5efd8; }

.p-select h2 .caret {
  border-width: 4px 3px 0;
}

.p-mode h2 {
  background: #e5efd8;
}

.ico {
  fill: none;
  stroke: #b2b2b2;
}

.big {
  flex-direction: column;
  justify-content: flex-start;
  width: 33px;
  height: 54px;
  padding-top: 2px;
  line-height: 12px;
}

.big span {
  margin-top: 4px;
}

.big .caret {
  margin-top: 2px;
}

.on {
  border: 1px solid #84b1dc;
  background: #c9dff5;
}

.big.on {
  margin-top: -1px;
}

.big.on svg {
  margin-bottom: 3px;
}

.stack {
  flex-direction: column;
  align-items: center;
  justify-content: flex-start;
  gap: 1px;
}

.mid {
  width: 30px;
  height: 26px;
}

.small {
  display: grid;
  grid-auto-rows: 18px;
}

.small button {
  justify-content: flex-start;
  gap: 3px;
}

.small.one {
  margin-left: 6px;
}

.small.geo {
  grid-template-columns: 52px 19px 22px;
}

.small.two {
  grid-template-columns: 26px 14px;
}

.small.three {
  grid-template-columns: 19px 19px 14px;
}

.large {
  display: grid;
  grid-auto-rows: 27px;
}

.large button {
  gap: 4px;
}

.large.two {
  grid-template-columns: 28px 28px;
}

.large.four {
  grid-template-columns: repeat(4, 30px);
}

.options {
  height: 19px;
  padding: 2px 6px;
  border-top: 1px solid #cfd6c8;
  background: #e5efd8;
  line-height: 18px;
}

/* workspace */
.workspace {
  display: flex;
  flex: 1;
  min-height: 0;
}

.side {
  display: flex;
  flex-direction: column;
  width: 168px;
  padding-top: 2px;
  border-right: 1px solid #bbb;
  background: #f0f0f0;
}

.side h3 {
  padding: 0 2px;
  font-family: Lato, "Open Sans", sans-serif;
  line-height: 18px;
  color: #444;
  white-space: nowrap;
}

.type {
  width: 166px;
  height: 52px;
  padding: 1px 2px;
  border: 1px solid #d8d8d8;
  color: #555;
  text-align: left;
}

.type .thumb {
  display: grid;
  place-items: center start;
  width: 49px;
  height: 48px;
  padding: 7px 0 0 1px;
  border: 1px solid #ddd;
  background: #fff;
}

.type-name {
  flex: 1;
  padding-left: 3px;
  line-height: 12px;
}

.type .caret {
  border-width: 3px 3px 0;
}

.filter {
  display: flex;
  gap: 5px;
  height: 18px;
  padding: 1px 1px 0;
}

.filter .pick {
  width: 103px;
  height: 17px;
}

.edit-type {
  gap: 3px;
  height: 14px;
}

.pick {
  display: grid;
  border: 1px solid #adadad;
  background: #e3e3e3;
}

.pick select, .pick .chev {
  grid-area: 1 / 1;
}

.pick select {
  appearance: none;
  padding-left: 2px;
}

.chev {
  align-self: center;
  justify-self: end;
  margin-right: 3px;
  fill: none;
  stroke: #555;
  pointer-events: none;
}

.scroller {
  display: flex;
  flex: 1;
  min-height: 0;
}

.props .scroller {
  flex: none;
  height: 255px;
}

.clip {
  flex: 1;
  overflow: hidden;
}

.grid {
  width: 100%;
  border-collapse: collapse;
  table-layout: fixed;
  background: #fff;
}

.c1 { width: 73px; }
.c3 { width: 10px; }

.grid th, .grid td {
  height: 13px;
  padding: 0 0 0 2px;
  border: solid #c4c4c4;
  border-width: 0 1px 1px 0;
  font-weight: normal;
  line-height: 12px;
  text-align: left;
  white-space: nowrap;
}

.grid th {
  padding-left: 6px;
}

.grid td {
  padding-left: 1px;
}

.grid td:last-child {
  padding: 0;
}

.grid .head th, .grid .head td {
  height: 15px;
  padding-left: 2px;
  border: 0;
  background: #dcdcdc;
}

.grid .ro {
  color: #868686;
}

.fold {
  fill: none;
  stroke: #222;
}

.grid input {
  display: block;
  width: 100%;
  height: 12px;
}

.grid .focus {
  outline: 1px solid #222;
}

.grid input[type="checkbox"] {
  appearance: none;
  display: grid;
  place-items: center;
  width: 10px;
  height: 10px;
  margin-left: 2px;
  border: 1px solid #333;
}

.grid input[type="checkbox"]::before {
  content: "";
  width: 6px;
  height: 3px;
  border: solid #333;
  border-width: 0 0 1px 1px;
  transform: rotate(-45deg);
}

.grid button {
  width: 8px;
  height: 12px;
  border: 1px solid #bbb;
  background: #e4e4e4;
}

.vbar {
  display: flex;
  flex-direction: column;
  align-items: center;
  width: 12px;
  padding: 4px 0;
  background: #f0f0f0;
}

.vbar span {
  width: 11px;
  margin: 4px 0 auto;
  background: #cdcdcd;
}

.thumb-props {
  height: 184px;
}

.thumb-tree {
  height: 75px;
}

.arrow {
  fill: none;
  stroke: #333;
}

.apply-row {
  display: flex;
  align-items: center;
  justify-content: space-between;
  height: 17px;
  padding: 0 2px;
}

.apply-row button {
  width: 55px;
  height: 16px;
  background: #cbcbcb;
  color: #929292;
}

/* project browser */
.browser {
  display: flex;
  flex: 1;
  flex-direction: column;
  min-height: 0;
  margin-top: 2px;
  border-top: 2px solid #d2d2d2;
}

.browser h3 {
  line-height: 14px;
}

.tree {
  display: grid;
  flex: 1;
  grid-auto-rows: 14px 13px;
  background: #fff;
  list-style: none;
  overflow: hidden;
}

.tree li {
  --a: transparent;
  --b: transparent;
  --c: transparent;
  display: flex;
  align-items: center;
  background:
    linear-gradient(var(--a), var(--a)) 7px 0 / 1px 100% no-repeat,
    linear-gradient(var(--b), var(--b)) 22px 0 / 1px 100% no-repeat,
    linear-gradient(var(--c), var(--c)) 37px 0 / 1px 100% no-repeat;
  white-space: nowrap;
}

.tree .run { --a: #ccc; }
.tree .l1, .tree .mid-run { --b: #ccc; }
.tree .l2 { --c: #ccc; }

.l0 { padding-left: 4px; }
.l1 { padding-left: 19px; }
.l2 { padding-left: 34px; }

.l0 svg {
  margin: 0 5px 0 4px;
}

.l1 .ex, .l2 .ex {
  margin-right: 8px;
  box-shadow: 0 0 0 1px #fff;
}

.l0.leaf {
  padding-left: 11px;
}

.l2.leaf::before {
  content: "";
  width: 9px;
  height: 1px;
  margin: 0 3px 0 4px;
  background: #ccc;
}

.tree b {
  padding: 0 2px;
  margin-left: -2px;
  background: #e2e2e2;
}

.ex {
  width: 7px;
  height: 7px;
  border: 1px solid #999;
  background: #fff;
  color: #335;
  font-size: 7px;
  line-height: 5px;
}

.hbar {
  display: flex;
  align-items: center;
  height: 13px;
  padding: 0 15px 0 4px;
}

.hbar span {
  width: 114px;
  height: 11px;
  margin: 0 auto 0 4px;
  background: #cdcdcd;
}

/* drawing view */
.view {
  position: relative;
  display: flex;
  flex: 1;
  flex-direction: column;
  min-width: 0;
  background: #fff;
}

.view-tabs {
  display: flex;
  height: 18px;
  padding: 3px 0 0 1px;
  border-bottom: 1px solid #ddd;
  background: #c9c9c9;
}

.vtab {
  justify-content: flex-start;
  gap: 5px;
  width: 96px;
  padding: 0 4px;
  color: #999;
}

.vtab.current {
  background: #fff;
}

.vtab .close {
  margin-left: auto;
}

.canvas {
  flex: 1;
  min-height: 0;
  overflow: hidden;
}

.facade rect {
  shape-rendering: crispEdges;
}

.wall { fill: #dadada; stroke: #333; }
.edge { fill: none; stroke: #222; }
.frame { fill: #5c5c5c; stroke: #151515; stroke-width: 2; }
.sash { fill: #444; stroke: #111; }
.glass { fill: #c8efff; stroke: #222; }
.shade { fill: #8ea6b1; }
.swing { fill: none; stroke: #000; stroke-dasharray: 1 2; }

.view-bar {
  display: flex;
  align-items: center;
  gap: 3px;
  height: 17px;
  padding-left: 1px;
  background: #f1f1f1;
}

.scale {
  width: 64px;
}

/* type properties window floats over the drawing */
.dialog {
  position: absolute;
  top: 18px;
  left: 434px;
  display: flex;
  flex-direction: column;
  width: 333px;
  height: 692px;
  border: 1px solid #777;
  background: #f0f0f0;
  box-shadow: 0 3px 9px rgba(0, 0, 0, 0.4);
  color: #111;
}

.dialog h3 {
  padding: 0 6px;
  background: #fff;
  font-family: Roboto, "Open Sans", sans-serif;
  line-height: 21px;
}

.dialog .body {
  display: flex;
  flex: 1;
  flex-direction: column;
  min-height: 0;
  padding: 9px 15px;
}

.fields, .actions, .body p, .body a {
  font-family: Roboto, "Open Sans", sans-serif;
}

.fields {
  display: grid;
  grid-template-columns: 52px 160px 88px;
  grid-auto-rows: 16px;
  gap: 8px 0;
}

.fields label {
  line-height: 16px;
}

.fields button {
  margin-left: 10px;
}

.rename {
  grid-column: 3;
}

.dialog button {
  border: 1px solid #b2b2b2;
  background: #e2e2e2;
}

.body p {
  margin: 4px 0 3px;
}

.params {
  flex: 1;
  min-height: 0;
  border: 1px solid #777;
  border-bottom-color: #ddd;
  background: #fff;
}

.params table {
  width: 291px;
  border-collapse: collapse;
  table-layout: fixed;
}

.params th, .params td {
  height: 13px;
  padding: 0 2px;
  border-bottom: 1px solid #c4c4c4;
  line-height: 12px;
  text-align: left;
  white-space: nowrap;
}

.params td:first-child {
  border-right: 1px solid #999;
}

.params thead th {
  height: 16px;
  border-right: 1px solid #444;
  border-bottom: 1px solid #444;
  background: #f0f0f0;
  font-weight: normal;
  text-align: center;
}

.params .group th {
  height: 17px;
  padding: 3px 0 0;
  border: 0;
}

.group div {
  padding: 0 2px;
  background: #9ab3d2;
  line-height: 14px;
}

.body a {
  margin: 9px 0 11px;
}

.actions {
  display: flex;
  gap: 6px;
  height: 17px;
}

.actions button {
  width: 66px;
}

/* Preview sits apart, the rest are kept to the right */
.actions .ok {
  margin-left: auto;
  border: 2px solid #1a78cc;
}

.dialog button:disabled {
  background: #ccc;
  color: #888;
}

/* status bar */
.status {
  display: flex;
  align-items: center;
  height: 17px;
  background: #c9c9c9;
}

.ready {
  flex: 1;
  padding-left: 1px;
}

.status .pick {
  width: 153px;
  height: 14px;
  margin: 0 6px 0 1px;
  border: 0;
  background: #fff;
}

.status .chev {
  stroke: #aaa;
}

.count {
  width: 25px;
  margin-left: 3px;
}

.grip {
  width: 11px;
  height: 12px;
  background: #999;
}
```
